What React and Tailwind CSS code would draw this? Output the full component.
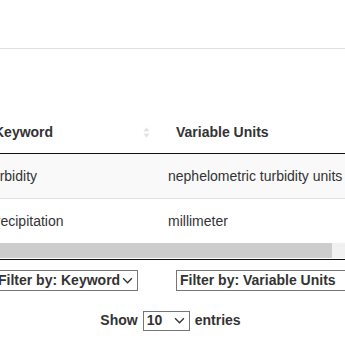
import React from "react";

const Chevron = ({ className }) => (
  <svg viewBox="0 0 12 8" className={className} fill="none" stroke="#333" strokeWidth="1.6">
    <path d="M1 1.5 L6 6.5 L11 1.5" />
  </svg>
);

const SortIcon = () => (
  <svg viewBox="0 0 8 12" className="w-[7px] h-[11px]">
    <path d="M4 0 L7.5 4.5 H0.5 Z" fill="#e3e3e3" />
    <path d="M4 12 L7.5 7.5 H0.5 Z" fill="#e3e3e3" />
  </svg>
);

const rows = [
  { keyword: "turbidity", units: "nephelometric turbidity units", shade: true },
  { keyword: "precipitation", units: "millimeter", shade: false },
];

export default function App() {
  return (
    <div
      className="w-[345px] h-[345px] overflow-hidden bg-white text-[#333] text-[14px]"
      style={{ fontFamily: '"Liberation Sans", Arial, sans-serif' }}
    >
      <div className="h-[49px] border-b border-[#dedede]" />
      <div className="h-[62px]" />

      <div className="ml-[-22px] w-[400px]">
        <div className="grid grid-cols-[180px_1fr] h-[43px] border-b border-[#111] font-bold">
          <div className="flex items-center justify-between pl-[16px] pr-[8px]">
            <span>Keyword</span>
            <SortIcon />
          </div>
          <div className="flex items-center pl-[18px]">Variable Units</div>
        </div>
        {rows.map((row) => (
          <div
            key={row.keyword}
            className={`grid grid-cols-[180px_1fr] h-[45px] border-b border-[#e2e2e2] ${
              row.shade ? "bg-[#f9f9f9]" : "bg-white"
            }`}
          >
            <div className="flex items-center pl-[10px]">{row.keyword}</div>
            <div className="flex items-center pl-[10px]">{row.units}</div>
          </div>
        ))}
      </div>

      <div className="flex h-[15px] mt-[-1px]">
        <div className="w-[332px] bg-[#cdcdcd]" />
        <div className="flex-1 bg-[#f1f1f1]" />
      </div>
      <div className="h-[2px] border-b border-[#111]" />

      <div className="flex items-center mt-[10px] font-bold whitespace-nowrap">
        <div className="ml-[-5px] w-[143px] shrink-0 h-[21px] border border-[#767676] flex items-center justify-between pl-[2px] pr-[4px]">
          <span>Filter by: Keyword</span>
          <Chevron className="w-[11px] h-[7px]" />
        </div>
        <div className="ml-[38px] w-[190px] shrink-0 h-[21px] border border-[#767676] flex items-center pl-[3px]">
          <span>Filter by: Variable Units</span>
        </div>
      </div>

      <div className="flex items-center justify-center mt-[19px] font-bold gap-[5px] pr-[4px]">
        <span>Show</span>
        <div className="w-[47px] h-[20px] border border-[#767676] flex items-center justify-between pl-[3px] pr-[4px]">
          <span>10</span>
          <Chevron className="w-[11px] h-[7px]" />
        </div>
        <span>entries</span>
      </div>
    </div>
  );
}
